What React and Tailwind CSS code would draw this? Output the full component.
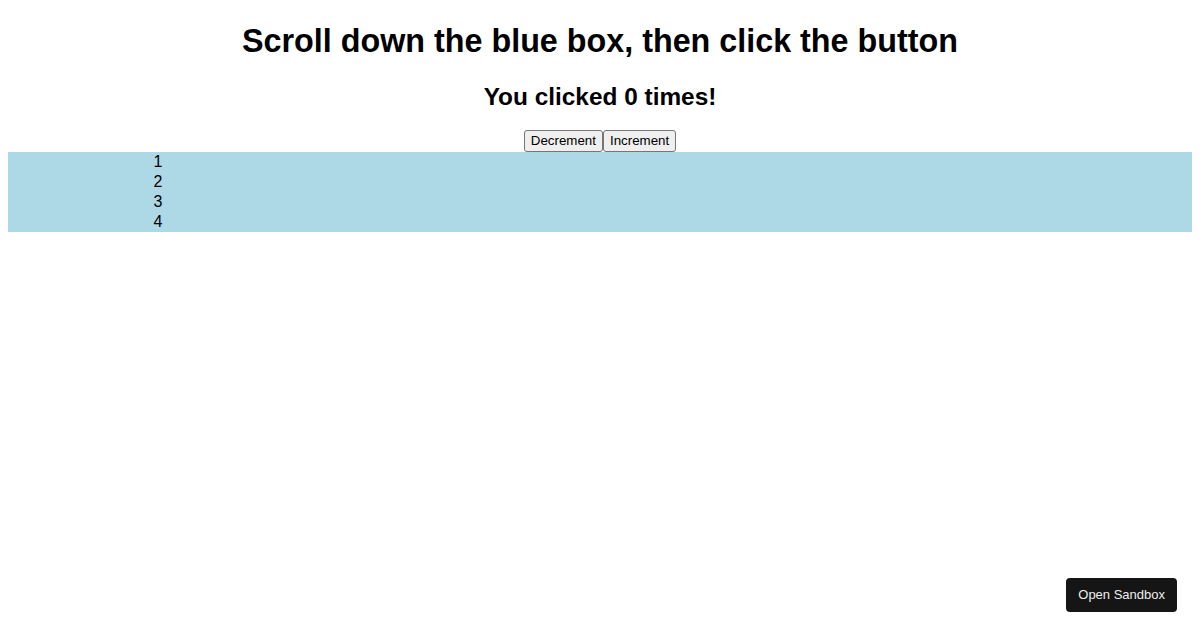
export default function App() {
  const count = 0
  const items = [1, 2, 3, 4]

  return (
    <div className="min-h-[630px] bg-white px-2 pt-[23px] text-black font-['Liberation_Sans',Arial,sans-serif] text-[16px]">
      <h1 className="mb-[22.5px] text-center text-[32.3px] font-bold leading-[37px]">
        Scroll down the blue box, then click the button
      </h1>
      <h2 className="mb-[17px] text-center text-[24.4px] font-bold leading-[27.6px]">
        You clicked {count} times!
      </h2>
      <div className="flex h-[25px] items-end justify-center">
        <button className="h-[22px] rounded-[3px] border border-[#767676] bg-[#efefef] px-[6px] pb-[1px] text-[13.33px] leading-[15px] text-black">
          Decrement
        </button>
        <button className="h-[22px] rounded-[3px] border border-[#767676] bg-[#efefef] px-[6px] pb-[1px] text-[13.33px] leading-[15px] text-black">
          Increment
        </button>
      </div>
      <div className="h-[80px] overflow-hidden bg-[#add8e6]">
        {items.map((n) => (
          <div key={n} className="w-[300px] text-center leading-[20px]">
            {n}
          </div>
        ))}
      </div>

      {/* floating sandbox link */}
      <button className="fixed bottom-[18px] right-[23px] h-[34px] rounded-[4px] bg-[#151515] px-[12px] text-[13px] text-[#eeeeee]">
        Open Sandbox
      </button>
    </div>
  )
}
